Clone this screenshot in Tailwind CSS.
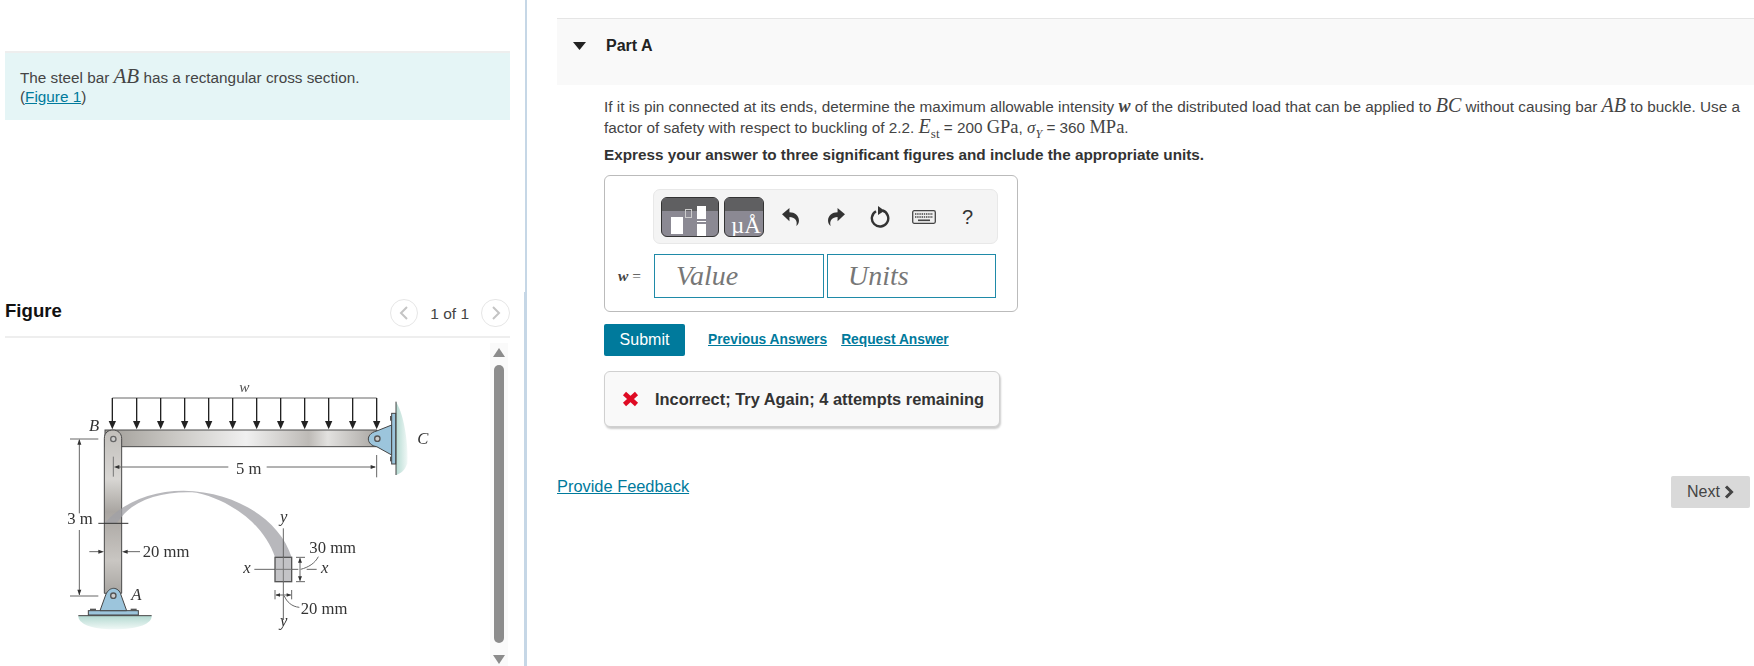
<!DOCTYPE html>
<html lang="en">
<head>
    <meta charset="UTF-8">
    <title>Part A</title>
    <script src="https://cdn.jsdelivr.net/npm/@tailwindcss/browser@4"></script>
</head>
<body class="bg-white font-['Liberation_Sans',Arial,sans-serif] text-[#444]">
<div class="flex h-[666px] w-[1754px] overflow-hidden">

    <!-- Left column -->
    <div class="w-[527px] shrink-0 border-r-2 border-[#c6d7e6] box-border pt-[51px]">
        <div class="ml-[5px] w-[505px] h-[69px] bg-[#e5f5f6] border-t-2 border-[#eeeeee] box-border pl-[15px] pt-[13px] text-[15.3px] leading-[19px]">
            <p>The steel bar <span class="font-['Liberation_Serif',serif] italic text-[21px] leading-none">AB</span> has a rectangular cross section.</p>
            <p>(<a class="text-[#007a9c] underline">Figure 1</a>)</p>
        </div>

        <div class="mt-[172px] border-r border-[#c6d7e6] h-[400px]">
            <!-- Figure header -->
            <div class="ml-[5px] w-[505px] h-[46px] border-b-2 border-[#eeeeee] box-border flex items-center justify-between pb-[6px]">
                <h2 class="text-[18.6px] font-bold text-[#111]">Figure</h2>
                <div class="flex items-center mt-[3px]">
                    <div class="w-[28px] h-[28px] rounded-full border border-[#e6e6e6] flex items-center justify-center">
                        <svg width="10" height="14" viewBox="0 0 10 14"><path d="M8 1 L2 7 L8 13" fill="none" stroke="#c4c4c4" stroke-width="2"/></svg>
                    </div>
                    <span class="ml-[12px] mr-[12px] text-[15.5px] mt-[3px]">1 of 1</span>
                    <div class="w-[29px] h-[28px] rounded-full border border-[#e6e6e6] flex items-center justify-center">
                        <svg width="10" height="14" viewBox="0 0 10 14"><path d="M2 1 L8 7 L2 13" fill="none" stroke="#c4c4c4" stroke-width="2"/></svg>
                    </div>
                </div>
            </div>

            <div class="ml-[5px] w-[505px] flex">
                <!-- Diagram -->
                <svg class="ml-[35px] mt-[22px] shrink-0 blur-[0.4px]" width="400" height="306" viewBox="0 0 1200 918">
                    <defs>
                        <linearGradient id="barH" x1="0" y1="0" x2="1" y2="0">
                            <stop offset="0" stop-color="#a09d98"/>
                            <stop offset="0.25" stop-color="#c9c7c3"/>
                            <stop offset="0.52" stop-color="#f0f0f0"/>
                            <stop offset="0.75" stop-color="#bdbab6"/>
                            <stop offset="0.82" stop-color="#e2e1df"/>
                            <stop offset="1" stop-color="#aaa7a3"/>
                        </linearGradient>
                        <linearGradient id="barV" x1="0" y1="0" x2="0" y2="1">
                            <stop offset="0" stop-color="#c2bfbb"/>
                            <stop offset="0.3" stop-color="#d8d6d3"/>
                            <stop offset="0.5" stop-color="#a9a5a1"/>
                            <stop offset="0.8" stop-color="#c9c6c2"/>
                            <stop offset="1" stop-color="#a8a5a1"/>
                        </linearGradient>
                        <linearGradient id="shadeB" x1="0" y1="0" x2="0" y2="1">
                            <stop offset="0" stop-color="#b5dad2"/>
                            <stop offset="1" stop-color="#f0f8f6"/>
                        </linearGradient>
                        <linearGradient id="shadeC" x1="0" y1="0" x2="1" y2="0">
                            <stop offset="0" stop-color="#b5dad2"/>
                            <stop offset="1" stop-color="#f0f8f6"/>
                        </linearGradient>
                    </defs>

                    <!-- ground and wall -->
                    <path d="M115 768 H335 C335 790 300 808 220 808 C150 808 115 790 115 768 Z" fill="url(#shadeB)"/>
                    <path d="M1068 125 C1095 170 1105 260 1102 310 C1095 330 1085 340 1068 345 Z" fill="url(#shadeC)"/>
                    <path d="M115 767 H335 M1068 125 V345" stroke="#444" stroke-width="3" fill="none"/>

                    <!-- beam BC -->
                    <rect x="195" y="210" width="815" height="50" fill="url(#barH)" stroke="#4a4a4a" stroke-width="3"/>
                    <!-- clevis C -->
                    <path d="M1055 195 L1010 213 C990 218 985 230 985 237 C985 248 995 258 1010 260 L1055 285 Z" fill="#9cc5dc" stroke="#444" stroke-width="3"/>
                    <rect x="1055" y="160" width="12" height="152" fill="#9cc5dc" stroke="#444" stroke-width="3"/>
                    <rect x="1050" y="168" width="6" height="14" fill="#555"/>
                    <rect x="1050" y="290" width="6" height="14" fill="#555"/>
                    <circle cx="1012" cy="236" r="8" fill="#ccc" stroke="#555" stroke-width="4"/>

                    <!-- column AB -->
                    <path d="M193 700 V235 C193 218 205 210 219 210 C233 210 245 220 245 235 V700 Z" fill="url(#barV)" stroke="#4a4a4a" stroke-width="3"/>
                    <circle cx="220" cy="237" r="8" fill="#ccc" stroke="#666" stroke-width="4"/>
                    <path d="M220 290 V350" stroke="#777" stroke-width="3"/>

                    <!-- base A -->
                    <rect x="145" y="752" width="150" height="13" fill="#9cc5dc" stroke="#444" stroke-width="3"/>
                    <rect x="150" y="746" width="18" height="6" fill="#555"/>
                    <rect x="272" y="746" width="18" height="6" fill="#555"/>
                    <path d="M180 752 L197 705 C203 690 213 685 221 685 C230 685 240 692 243 705 L260 752 Z" fill="#9cc5dc" stroke="#444" stroke-width="3"/>
                    <circle cx="220" cy="707" r="8" fill="#ccc" stroke="#555" stroke-width="4"/>

                    <!-- buckled shape -->
                    <path d="M193 490 C250 425 340 392 430 392 C590 395 720 480 755 592 L705 592 C680 510 590 425 470 398 C380 392 290 415 245 470 L230 490 Z" fill="#a0a0a5" fill-opacity="0.75"/>

                    <!-- distributed load -->
                    <path d="M217 114 H1010" fill="none" stroke="#666" stroke-width="3"/>
                    <path d="M217 114 V187 M290 114 V187 M362 114 V187 M434 114 V187 M506 114 V187 M578 114 V187 M650 114 V187 M722 114 V187 M794 114 V187 M866 114 V187 M938 114 V187 M1010 114 V187" fill="none" stroke="#222" stroke-width="4"/>
                    <g fill="#222">
                        <path d="M206 183 H228 L217 208 Z"/><path d="M279 183 H301 L290 208 Z"/><path d="M351 183 H373 L362 208 Z"/><path d="M423 183 H445 L434 208 Z"/>
                        <path d="M495 183 H517 L506 208 Z"/><path d="M567 183 H589 L578 208 Z"/><path d="M639 183 H661 L650 208 Z"/><path d="M711 183 H733 L722 208 Z"/>
                        <path d="M783 183 H805 L794 208 Z"/><path d="M855 183 H877 L866 208 Z"/><path d="M927 183 H949 L938 208 Z"/><path d="M999 183 H1021 L1010 208 Z"/>
                    </g>

                    <!-- dimensions -->
                    <g stroke="#666" stroke-width="3" fill="none">
                        <path d="M90 237 H175 M90 708 H175 M118 240 V460 M118 510 V705"/>
                        <path d="M228 321 H565 M680 321 H1005 M1010 285 V352"/>
                        <path d="M148 575 H185 M252 575 H300"/>
                        <path d="M730 505 V592 M730 665 V780 M643 628 H775 M800 628 H830"/>
                        <path d="M768 592 H795 M768 665 H795 M780 595 V662 M705 690 V718 M755 690 V718 M708 705 H752"/>
                        <path d="M835 590 C825 610 805 622 782 628 M778 742 C755 740 740 725 733 708"/>
                    </g>
                    <path d="M175 490 H265" stroke="#333" stroke-width="3"/>
                    <g fill="#333">
                        <path d="M118 237 L112 254 H124 Z M118 706 L112 689 H124 Z"/>
                        <path d="M222 321 L238 315 V327 Z M1008 321 L992 315 V327 Z"/>
                        <path d="M192 575 L175 569 V581 Z M246 575 L263 569 V581 Z"/>
                        <path d="M780 593 L774 608 H786 Z M780 664 L774 649 H786 Z"/>
                        <path d="M706 705 L720 700 V710 Z M754 705 L740 700 V710 Z"/>
                    </g>

                    <!-- cross section -->
                    <rect x="705" y="592" width="50" height="73" fill="#c3c3c6" stroke="#555" stroke-width="4"/>
                    <path d="M730 592 V665 M705 628 H755" stroke="#777" stroke-width="3"/>

                    <!-- labels -->
                    <g font-family="Liberation Serif, serif" font-size="50" fill="#333">
                        <text x="82" y="491">3 m</text>
                        <text x="588" y="341">5 m</text>
                        <text x="308" y="591">20 mm</text>
                        <text x="808" y="580">30 mm</text>
                        <text x="782" y="761">20 mm</text>
                        <g font-style="italic">
                            <text x="598" y="96" font-size="46" fill="#555">w</text>
                            <text x="147" y="213">B</text>
                            <text x="1132" y="252">C</text>
                            <text x="274" y="720">A</text>
                            <text x="720" y="486">y</text>
                            <text x="720" y="798">y</text>
                            <text x="610" y="640">x</text>
                            <text x="843" y="640">x</text>
                        </g>
                    </g>
                </svg>

                <!-- Scrollbar -->
                <div class="ml-[50px] mt-[5px] w-[18px] h-[325px] bg-[#fafafa] flex flex-col items-center">
                    <svg class="mt-[5px]" width="12" height="9" viewBox="0 0 12 9"><path d="M6 0 L12 9 H0 Z" fill="#8c8c8c"/></svg>
                    <div class="mt-[8px] w-[10px] h-[278px] rounded-full bg-[#8c8c8c]"></div>
                    <svg class="mt-[12px]" width="12" height="9" viewBox="0 0 12 9"><path d="M0 0 H12 L6 9 Z" fill="#8c8c8c"/></svg>
                </div>
            </div>
        </div>
    </div>

    <!-- Right column -->
    <div class="flex-1 pl-[30px] pt-[18px]">
        <div class="h-[67px] bg-[#f9f9f9] border-t border-[#e5e5e5] box-border flex items-start pt-[17px]">
            <svg class="ml-[16px] mt-[6px]" width="13" height="8" viewBox="0 0 13 8"><path d="M0 0 H13 L6.5 8 Z" fill="#222"/></svg>
            <h3 class="ml-[20px] text-[16px] leading-[20px] font-bold text-[#222]">Part A</h3>
        </div>

        <div class="pl-[47px]">
            <p class="mt-[10px] text-[15.3px] leading-[18px]">If it is pin connected at its ends, determine the maximum allowable intensity <span class="font-['Liberation_Serif',serif] italic text-[18px] font-bold leading-none">w</span> of the distributed load that can be applied to <span class="font-['Liberation_Serif',serif] italic text-[20px] leading-none">BC</span> without causing bar <span class="font-['Liberation_Serif',serif] italic text-[20px] leading-none">AB</span> to buckle. Use a<br>factor of safety with respect to buckling of 2.2. <span class="font-['Liberation_Serif',serif] italic text-[20px] leading-none">E<sub class="not-italic text-[13px] leading-none align-[-2px]">st</sub></span> = 200 <span class="font-['Liberation_Serif',serif] text-[18.5px] leading-none">GPa</span>, <span class="font-['Liberation_Serif',serif] italic text-[17px] leading-none">σ<sub class="text-[12px] leading-none align-[-2px]">Y</sub></span> = 360 <span class="font-['Liberation_Serif',serif] text-[18.5px] leading-none">MPa</span>.</p>
            <p class="mt-[9px] text-[15.3px] leading-[18px] font-bold text-[#333]">Express your answer to three significant figures and include the appropriate units.</p>

            <!-- Answer box -->
            <div class="mt-[11px] w-[414px] h-[137px] border border-[#bbbbbb] rounded-[6px] box-border pl-[13px] pt-[13px]">
                <div class="ml-[35px] w-[345px] h-[55px] bg-[#f4f4f4] border border-[#e8e8e8] rounded-[7px] box-border flex items-center pl-[7px]">
                    <div class="relative w-[58px] h-[40px] rounded-[6px] border border-[#333] overflow-hidden bg-[#8b8993] flex flex-col">
                        <div class="h-[13px] bg-[#5f5f61]"></div>
                        <div class="absolute left-[9px] top-[19px] w-[12px] h-[17px] bg-white"></div>
                        <div class="absolute left-[23px] top-[11px] w-[7px] h-[9px] border border-[#ccc]"></div>
                        <div class="absolute left-[35px] top-[8px] w-[9px] h-[13px] bg-white"></div>
                        <div class="absolute left-[35px] top-[23px] w-[9px] h-px bg-white"></div>
                        <div class="absolute left-[35px] top-[26px] w-[9px] h-[12px] bg-white"></div>
                    </div>
                    <div class="relative ml-[5px] w-[40px] h-[40px] rounded-[6px] border border-[#333] overflow-hidden bg-[#8b8993]">
                        <div class="h-[13px] bg-[#5f5f61]"></div>
                        <span class="absolute left-[6px] bottom-[-3px] font-['Liberation_Serif',serif] text-[23px] leading-[26px] text-white whitespace-nowrap">µÅ</span>
                    </div>
                    <svg class="ml-[18px]" width="17" height="18" viewBox="0 0 16 17"><path d="M0 6 L7 0 V4 C12 4 16 7 16 12 C16 14 15 16 13.5 17 C15 12 12 8.5 7 8.5 V12.5 Z" fill="#333"/></svg>
                    <svg class="ml-[29px]" width="17" height="18" viewBox="0 0 16 17"><path d="M16 6 L9 0 V4 C4 4 0 7 0 12 C0 14 1 16 2.5 17 C1 12 4 8.5 9 8.5 V12.5 Z" fill="#333"/></svg>
                    <svg class="ml-[25px]" width="20" height="22" viewBox="0 0 20 22"><path d="M12.5 4.5 A8.2 8.2 0 1 1 6 5.2" fill="none" stroke="#333" stroke-width="2.4"/><path d="M8 0 L14.5 4.8 L8 9 Z" fill="#333"/></svg>
                    <svg class="ml-[22px]" width="24" height="14" viewBox="0 0 24 14"><rect x="0.7" y="0.7" width="22.6" height="12.6" rx="1.5" fill="#eee" stroke="#444" stroke-width="1.3"/><path d="M3 4 H21 M3 7 H21" stroke="#444" stroke-width="1.6" stroke-dasharray="1.4 0.8"/><path d="M6 10.3 H18" stroke="#444" stroke-width="1.6"/></svg>
                    <span class="ml-[26px] text-[20px] text-[#333]">?</span>
                </div>
                <div class="mt-[10px] flex items-center">
                    <span class="w-[36px] text-[15.5px] font-['Liberation_Serif',serif] whitespace-nowrap"><i class="font-bold">w</i> =</span>
                    <div class="w-[170px] h-[44px] border border-[#1f8aa8] box-border flex items-center pl-[21px] font-['Liberation_Serif',serif] italic text-[28px] text-[#777]">Value</div>
                    <div class="ml-[3px] w-[169px] h-[44px] border border-[#1f8aa8] box-border flex items-center pl-[20px] font-['Liberation_Serif',serif] italic text-[28px] text-[#777]">Units</div>
                </div>
            </div>

            <!-- Actions -->
            <div class="mt-[12px] flex items-center">
                <button class="w-[81px] h-[32px] bg-[#007a9c] rounded-[2px] text-white text-[16px]">Submit</button>
                <a class="ml-[23px] text-[13.8px] font-bold text-[#007a9c] underline">Previous Answers</a>
                <a class="ml-[14px] text-[13.8px] font-bold text-[#007a9c] underline">Request Answer</a>
            </div>

            <div class="mt-[15px] w-[396px] h-[56px] bg-[#f9f9f9] border border-[#d0d0d0] rounded-[6px] shadow-[1px_2px_2px_rgba(0,0,0,0.2)] box-border flex items-center pl-[17px]">
                <svg width="17" height="16" viewBox="0 0 17 16"><path d="M2.5 2.5 L14.5 13.5 M14.5 2.5 L2.5 13.5" stroke="#df0b24" stroke-width="4.6"/></svg>
                <span class="ml-[16px] text-[16.4px] font-bold text-[#333]">Incorrect; Try Again; 4 attempts remaining</span>
            </div>
        </div>

        <!-- Footer row -->
        <div class="mt-[49px] flex items-start justify-between pr-[4px]">
            <a class="text-[16.4px] text-[#007a9c] underline leading-[20px]">Provide Feedback</a>
            <button class="w-[79px] h-[32px] bg-[#d9d9d9] rounded-[2px] text-[16px] text-[#444] flex items-center justify-center">Next
                <svg class="ml-[4px]" width="10" height="14" viewBox="0 0 10 14"><path d="M2 1.5 L7.5 7 L2 12.5" fill="none" stroke="#444" stroke-width="3"/></svg>
            </button>
        </div>
    </div>
</div>
</body>
</html>
